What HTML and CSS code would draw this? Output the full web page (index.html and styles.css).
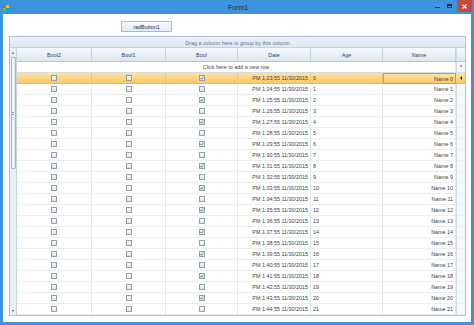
FILE: index.html
```html
<!DOCTYPE html>
<html lang="en">
<head>
    <meta charset="UTF-8">
    <meta name="viewport" content="width=device-width, initial-scale=1.0">
    <title>Form1</title>
    <link rel="stylesheet" href="styles.css">
</head>
<body>
    <div class="window">
        <div class="titlebar">
            <div class="tb-left">
                <svg class="app-icon" width="6" height="6" viewBox="0 0 6 6">
                    <rect x="0" y="0" width="3" height="3" fill="#f25022"/>
                    <rect x="3" y="0" width="3" height="3" fill="#ffb900"/>
                    <rect x="0" y="3" width="3" height="3" fill="#7fba00"/>
                    <rect x="3" y="3" width="3" height="3" fill="#00a4ef"/>
                </svg>
            </div>
            <div class="tb-title">Form1</div>
            <div class="tb-controls">
                <span class="ctl ctl-min"><span class="min-bar"></span></span>
                <span class="ctl ctl-max"><span class="max-box"></span></span>
                <span class="ctl ctl-close">
                    <svg width="5" height="5" viewBox="0 0 5 5">
                        <path d="M0.5 0.5 L4.5 4.5 M4.5 0.5 L0.5 4.5" stroke="#fff" stroke-width="1.1"/>
                    </svg>
                </span>
            </div>
        </div>

        <div class="client">
            <button class="rad-button">radButton1</button>

            <div class="grid">
                <div class="group-panel">Drag a column here to group by this column</div>
                <div class="grid-main">
                    <div class="vscroll">
                        <div class="arrow arrow-up"></div>
                        <div class="track">
                            <div class="thumb"><span class="grip"></span></div>
                        </div>
                        <div class="arrow arrow-down"></div>
                    </div>
                    <div class="table">
                        <div class="row header-row">
                            <div class="cell head">Bool2</div>
                            <div class="cell head">Bool1</div>
                            <div class="cell head">Bool</div>
                            <div class="cell head">Date</div>
                            <div class="cell head">Age</div>
                            <div class="cell head">Name</div>
                            <div class="cell head indicator"></div>
                        </div>
                        <div class="row new-row">
                            <div class="cell new-row-text">Click here to add a new row</div>
                            <div class="cell indicator new-mark">*</div>
                        </div>
                        <div id="rows">
                            <!-- data rows are inserted here -->
                        </div>
                    </div>
                </div>
            </div>
        </div>
    </div>

    <script>
        const checkSvg = '<svg width="4" height="4" viewBox="0 0 4 4"><path d="M0.4 2 L1.5 3.2 L3.6 0.6" fill="none" stroke="#4a8a76" stroke-width="0.9"/></svg>';

        function checkbox(checked) {
            return '<span class="check' + (checked ? ' checked' : '') + '">' + (checked ? checkSvg : '') + '</span>';
        }

        function createRow(i) {
            const row = document.createElement('div');
            row.className = 'row data-row' + (i === 0 ? ' current' : '');
            const minute = 23 + i;
            row.innerHTML = `
                <div class="cell bool">${checkbox(false)}</div>
                <div class="cell bool">${checkbox(false)}</div>
                <div class="cell bool">${checkbox(i % 2 === 0)}</div>
                <div class="cell date">PM 1:${minute}:55 11/30/2015</div>
                <div class="cell age">${i}</div>
                <div class="cell name">Name ${i}</div>
                <div class="cell indicator">${i === 0 ? '<span class="current-arrow"></span>' : ''}</div>
            `;
            return row;
        }

        const rows = document.getElementById('rows');
        for (let i = 0; i < 22; i++) {
            rows.appendChild(createRow(i));
        }
    </script>
</body>
</html>
```

FILE: styles.css
```css
body {
    margin: 0;
    padding: 0;
    font-family: 'Liberation Sans', Arial, sans-serif;
    background: #3f93dc;
}

.window {
    width: 474px;
    height: 325px;
    display: flex;
    flex-direction: column;
    background: #3f93dc;
}

/* title bar */
.titlebar {
    height: 14px;
    display: grid;
    grid-template-columns: 1fr auto 1fr;
    align-items: center;
    flex-shrink: 0;
}

.tb-left {
    display: flex;
    align-items: center;
    padding-left: 3px;
}

.app-icon {
    display: block;
    margin-top: 1px;
}

.tb-title {
    font-size: 7px;
    color: #22303e;
    margin-left: 2px;
}

.tb-controls {
    display: flex;
    justify-content: flex-end;
    align-self: start;
    padding-right: 2px;
}

.ctl {
    display: flex;
    align-items: center;
    justify-content: center;
    height: 12px;
}

.ctl-min {
    width: 12px;
}

.min-bar {
    width: 5px;
    height: 1px;
    background: #1d2c3a;
    margin-top: 3px;
}

.ctl-max {
    width: 12px;
    margin-right: 2px;
}

.max-box {
    width: 5px;
    height: 4px;
    border: 1px solid #1d2c3a;
    border-top-width: 2px;
    box-sizing: border-box;
}

.ctl-close {
    width: 15px;
    background: #c9483d;
}

.ctl-close svg {
    display: block;
}

/* form client area */
.client {
    flex: 1;
    margin: 0 3px 3px 3px;
    background: #ffffff;
    padding: 7px 5px 6px 6px;
    display: flex;
    flex-direction: column;
}

.rad-button {
    display: block;
    margin: 0 0 4px 112px;
    width: 51px;
    height: 11px;
    padding: 0;
    font-family: inherit;
    font-size: 5.4px;
    color: #2a3746;
    border: 1px solid #a9b7c9;
    border-radius: 1px;
    background: linear-gradient(#f8fafd, #e2e9f2);
}

/* grid */
.grid {
    border: 1px solid #a9bfda;
    display: flex;
    flex-direction: column;
    height: 280px;
    box-sizing: border-box;
    background: #ffffff;
}

.group-panel {
    height: 11px;
    display: flex;
    align-items: center;
    justify-content: center;
    font-size: 5.4px;
    color: #66768a;
    background: linear-gradient(#edf2f9, #dfe7f2);
    border-bottom: 1px solid #c3d2e4;
    box-sizing: border-box;
    padding-top: 1px;
}

.grid-main {
    flex: 1;
    display: flex;
}

.vscroll {
    width: 7px;
    box-sizing: border-box;
    border-right: 1px solid #c6d3e3;
    background: #e9eef5;
    display: flex;
    flex-direction: column;
}

.arrow {
    height: 9px;
    display: flex;
    align-items: center;
    justify-content: center;
}

.arrow-up::before,
.arrow-down::before {
    content: '';
    width: 0;
    height: 0;
    border-left: 1.5px solid transparent;
    border-right: 1.5px solid transparent;
}

.arrow-up::before {
    border-bottom: 2px solid #4a5664;
}

.arrow-down::before {
    border-top: 2px solid #4a5664;
}

.track {
    flex: 1;
    padding: 0 0.5px;
}

.thumb {
    height: 112px;
    border: 1px solid #a6b6ca;
    border-radius: 1px;
    background: linear-gradient(to right, #f7f9fc, #dfe6ef);
    box-sizing: border-box;
    display: flex;
    align-items: center;
    justify-content: center;
}

.grip {
    width: 2px;
    height: 3px;
    border-top: 1px solid #8f9caa;
    border-bottom: 1px solid #8f9caa;
    box-sizing: border-box;
}

.table {
    flex: 1;
    display: flex;
    flex-direction: column;
}

.row {
    display: grid;
    grid-template-columns: 75px 74px 72px 73px 72px 73px 9px;
    height: 11px;
}

.cell {
    box-sizing: border-box;
    display: flex;
    align-items: center;
    font-size: 5.4px;
    color: #3c4148;
    border-right: 1px solid #e4e8ed;
    border-bottom: 1px solid #eaedf1;
    padding: 0 2px;
    white-space: nowrap;
    overflow: hidden;
}

.header-row {
    height: 14px;
}

.cell.head {
    justify-content: center;
    color: #3c4754;
    background: linear-gradient(#f6f9fd, #dce6f2);
    border-right: 1px solid #c4d2e3;
    border-bottom: 1px solid #b3c5db;
}

.cell.head.indicator {
    border-right: none;
}

.new-row-text {
    grid-column: 1 / 7;
    justify-content: center;
    color: #3f4955;
    border-bottom: 1px solid #d3dde9;
}

.indicator {
    justify-content: center;
    padding: 0;
    border-right: none;
    background: #f5f8fb;
    border-left: 1px solid #d2dce8;
}

.new-mark {
    color: #37506d;
    font-size: 6px;
    border-bottom: 1px solid #d3dde9;
}

.bool {
    justify-content: center;
}

.date {
    justify-content: flex-end;
}

.age {
    justify-content: flex-start;
}

.name {
    justify-content: flex-end;
}

.check {
    width: 6px;
    height: 6px;
    box-sizing: border-box;
    border: 1px solid #949fac;
    background: linear-gradient(#f7f8fa, #dfe4ea);
    display: flex;
    align-items: center;
    justify-content: center;
}

.check.checked {
    background: linear-gradient(#eef5f3, #d6e6e1);
}

.check svg {
    display: block;
}

.data-row.current .cell {
    background: linear-gradient(#fee2a0, #fbc869);
    border-bottom-color: #f1b752;
    border-right-color: #f4c272;
}

.data-row.current .cell.name {
    border: 1px solid #dd9a3a;
}

.data-row.current .indicator {
    border-left: none;
}

.current-arrow {
    width: 0;
    height: 0;
    border-top: 2px solid transparent;
    border-bottom: 2px solid transparent;
    border-right: 2.5px solid #1b1b1b;
}
```
